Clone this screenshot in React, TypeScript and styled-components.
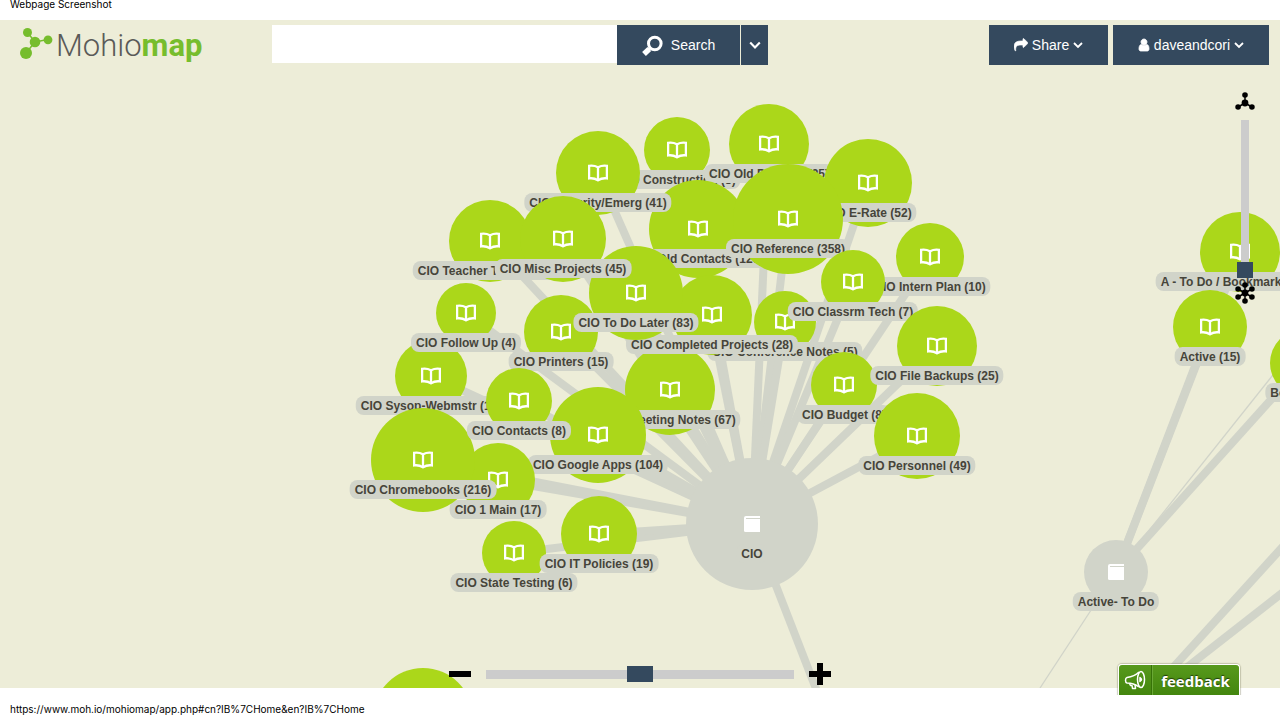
import React from "react";
import styled, { createGlobalStyle } from "styled-components";

const color = {
  page: "#ffffff",
  canvas: "#ededd8",
  leaf: "#abd71a",
  hub: "#d1d4c9",
  navy: "#34495e",
  text: "#46443a",
  track: "#cccccc",
  brand: "#76bd2d",
};

type Kind = "leaf" | "hub";
interface MapNode {
  x: number;
  y: number;
  r: number;
  label?: string;
  kind?: Kind;
}

/* Coordinates are on the free canvas; later nodes lie over earlier ones. */
const nodes: MapNode[] = [
  { x: 677, y: 130, r: 33, label: "CIO Construction (8)" },
  { x: 769, y: 124, r: 40, label: "CIO Old Projects (25)" },
  { x: 698, y: 209, r: 49, label: "CIO Old Contacts (120)" },
  { x: 598, y: 153, r: 42, label: "CIO Security/Emerg (41)" },
  { x: 868, y: 163, r: 44, label: "CIO E-Rate (52)" },
  { x: 788, y: 199, r: 55, label: "CIO Reference (358)" },
  { x: 930, y: 237, r: 34, label: "CIO Intern Plan (10)" },
  { x: 785, y: 302, r: 31, label: "CIO Conference Notes (5)" },
  { x: 844, y: 365, r: 33, label: "CIO Budget (8)" },
  { x: 670, y: 370, r: 45, label: "CIO Meeting Notes (67)" },
  { x: 712, y: 295, r: 40, label: "CIO Completed Projects (28)" },
  { x: 561, y: 312, r: 37, label: "CIO Printers (15)" },
  { x: 636, y: 273, r: 47, label: "CIO To Do Later (83)" },
  { x: 490, y: 221, r: 41, label: "CIO Teacher Training (38)" },
  { x: 563, y: 219, r: 43, label: "CIO Misc Projects (45)" },
  { x: 598, y: 415, r: 48, label: "CIO Google Apps (104)" },
  { x: 853, y: 262, r: 32, label: "CIO Classrm Tech (7)" },
  { x: 937, y: 326, r: 40, label: "CIO File Backups (25)" },
  { x: 917, y: 416, r: 43, label: "CIO Personnel (49)" },
  { x: 431, y: 356, r: 36, label: "CIO Sysop-Webmstr (16)" },
  { x: 498, y: 460, r: 37, label: "CIO 1 Main (17)" },
  { x: 423, y: 440, r: 52, label: "CIO Chromebooks (216)" },
  { x: 519, y: 381, r: 33, label: "CIO Contacts (8)" },
  { x: 466, y: 293, r: 30, label: "CIO Follow Up (4)" },
  { x: 514, y: 533, r: 32, label: "CIO State Testing (6)" },
  { x: 599, y: 514, r: 38, label: "CIO IT Policies (19)" },
];

const cio: MapNode = { x: 752, y: 504, r: 66, label: "CIO", kind: "hub" };
const todo: MapNode = { x: 1116, y: 552, r: 32, label: "Active- To Do", kind: "hub" };

const todoNodes: MapNode[] = [
  { x: 1240, y: 232, r: 40, label: "A - To Do / Bookmarks (126)" },
  { x: 1210, y: 307, r: 37, label: "Active (15)" },
  { x: 1304, y: 343, r: 34, label: "Best Of (19)" },
];

const looseNodes: MapNode[] = [{ x: 423, y: 698, r: 50 }];

const looseLinks = [
  { x1: 752, y1: 504, x2: 855, y2: 769, w: 8 },
  { x1: 1140, y1: 684, x2: 1326, y2: 479, w: 8 },
  { x1: 1140, y1: 684, x2: 1332, y2: 534, w: 8 },
  { x1: 1116, y1: 552, x2: 1300, y2: 321, w: 1.3 },
  { x1: 1116, y1: 552, x2: 1040, y2: 668, w: 1.3 },
];

const GlobalStyle = createGlobalStyle`
  *, *::before, *::after { box-sizing: border-box; }
  body {
    margin: 0;
    background: ${color.page};
    font-family: "Liberation Sans", Arial, sans-serif;
  }
  button, input { font: inherit; border: 0; margin: 0; padding: 0; }
  button { cursor: pointer; }
`;

const Page = styled.div`
  display: flex;
  flex-direction: column;
  min-height: 100vh;
`;

const Caption = styled.div<{ $height: number; $shift?: boolean }>`
  flex: none;
  height: ${(p) => p.$height}px;
  padding: 0 10px;
  display: flex;
  align-items: ${(p) => (p.$shift ? "flex-end" : "flex-start")};
  font-family: Inter, Verdana, sans-serif;
  font-size: 10px;
  line-height: ${(p) => (p.$shift ? 12 : 8)}px;
  color: #000;
  white-space: nowrap;
`;

const Stage = styled.main`
  position: relative;
  flex: 1;
  min-height: 600px;
  background: ${color.canvas};
`;

const Canvas = styled.div`
  position: absolute;
  inset: 0;
  overflow: hidden;
`;

const Links = styled.svg`
  display: block;
  width: 100%;
  height: 100%;
`;

const NodeButton = styled.button<{ $x: number; $y: number; $r: number; $kind: Kind }>`
  position: absolute;
  left: ${(p) => p.$x - p.$r}px;
  top: ${(p) => p.$y - p.$r}px;
  width: ${(p) => p.$r * 2}px;
  height: ${(p) => p.$r * 2}px;
  display: flex;
  align-items: center;
  justify-content: center;
  border-radius: 50%;
  background: ${(p) => color[p.$kind]};
`;

const NodeLabel = styled.span`
  position: absolute;
  top: calc(50% + 20px);
  left: 50%;
  transform: translateX(-50%);
  padding: 2px 5px 0;
  border-radius: 8px;
  background: ${color.hub};
  color: ${color.text};
  font-size: 12px;
  font-weight: bold;
  line-height: 17px;
  white-space: nowrap;
`;

const Header = styled.header`
  position: relative;
  display: flex;
  align-items: flex-start;
  padding: 5px 11px 0 20px;
`;

const Logo = styled.a`
  flex: none;
  display: flex;
  width: 252px;
  height: 40px;
  color: #5a5a58;
  font-family: Roboto, sans-serif;
  font-size: 31px;
  font-weight: 300;
  line-height: 42px;
  text-decoration: none;

  svg { flex: none; margin: 2px 2px 0 0; }
  strong { color: ${color.brand}; font-weight: 700; }
`;

const SearchForm = styled.form`
  flex: 0 1 496px;
  min-width: 240px;
  display: flex;
  align-items: flex-start;
`;

const SearchInput = styled.input`
  flex: 1;
  min-width: 0;
  height: 38px;
  padding: 0 10px;
  border-radius: 0;
  background: #fff;
  font-size: 14px;
`;

const BarButton = styled.button<{ $width: number; $gap?: number }>`
  flex: none;
  display: flex;
  align-items: center;
  justify-content: center;
  gap: ${(p) => p.$gap ?? 4}px;
  width: ${(p) => p.$width}px;
  height: 40px;
  background: ${color.navy};
  color: #fff;
  font-size: 14px;
`;

const SplitButton = styled(BarButton)`
  margin-left: 1px;
`;

const Actions = styled.nav`
  display: flex;
  gap: 5px;
  margin-left: auto;
`;

const DepthControl = styled.div`
  position: absolute;
  top: 71px;
  right: 24px;
  display: flex;
  flex-direction: column;
  align-items: center;
  width: 22px;
`;

const IconButton = styled.button`
  display: flex;
  align-items: center;
  justify-content: center;
  background: transparent;
  color: #000;
`;

const Range = styled.input<{ $vertical?: boolean }>`
  appearance: none;
  display: block;
  background: transparent;
  width: ${(p) => (p.$vertical ? 16 : 308)}px;
  height: ${(p) => (p.$vertical ? 158 : 16)}px;
  writing-mode: ${(p) => (p.$vertical ? "vertical-lr" : "horizontal-tb")};

  &::-webkit-slider-runnable-track {
    background: linear-gradient(${color.track}, ${color.track}) center / ${(p) =>
      p.$vertical ? "8px 100%" : "100% 9px"} no-repeat;
  }
  &::-webkit-slider-thumb {
    appearance: none;
    width: ${(p) => (p.$vertical ? 16 : 26)}px;
    height: 16px;
    background: ${color.navy};
  }
`;

const DepthRange = styled(Range)`
  margin: 8px 0 3px;
`;

const ZoomControl = styled.div`
  position: absolute;
  left: 0;
  right: 0;
  bottom: 3px;
  display: flex;
  align-items: center;
  justify-content: center;
  gap: 15px;
  pointer-events: none;

  > * { pointer-events: auto; }
`;

const Feedback = styled.button`
  position: absolute;
  right: 40px;
  bottom: -7px;
  display: flex;
  width: 122px;
  height: 31px;
  border: 1px solid #fff;
  border-bottom: 0;
  border-radius: 4px 4px 0 0;
  background: linear-gradient(#57991c, #43860e);
  box-shadow: 0 0 1px 1px rgba(120, 120, 90, 0.35);
  clip-path: inset(-3px -3px 0 -3px);
  color: #fff;
  font-family: "Open Sans", Verdana, sans-serif;
  font-size: 15px;
  font-weight: bold;
  line-height: 32px;
  text-shadow: 0 -1px 1px rgba(0, 0, 0, 0.6);
`;

const FeedbackIcon = styled.span`
  display: flex;
  align-items: center;
  justify-content: center;
  width: 33px;
  height: 30px;
  border-right: 1px solid #377208;
  box-shadow: 1px 0 0 #6aa836;
`;

const FeedbackText = styled.span`
  flex: 1;
  text-align: center;
`;

const OpenBook = () => (
  <svg width="20" height="18" viewBox="0 0 20 18" fill="none" stroke="#fff" strokeWidth="2.300" aria-hidden="true">
    <path d="M1.100 1.800C4.200 1.300 7.500 1.900 10 3.200C12.500 1.900 15.800 1.300 18.900 1.800V14.400C15.800 14 12.500 14.700 10 16.300C7.500 14.700 4.200 14 1.100 14.400Z" />
    <path d="M10 3V16" />
  </svg>
);

const ClosedBook = () => (
  <svg width="16" height="16" viewBox="0 0 16 16" aria-hidden="true">
    <path d="M2 0H16V16H1.500Q0 16 0 14.500V2Q0 0 2 0Z" fill="#fff" />
    <path d="M2 2.500H16" stroke={color.hub} strokeWidth="1" />
  </svg>
);

const LogoMark = () => (
  <svg width="34" height="34" viewBox="0 0 34 34" fill={color.brand} stroke={color.brand} strokeWidth="1.5" aria-hidden="true">
    <path d="M7.500 5.500L15 15L28 12.600M15 15L6 26" fill="none" />
    <g stroke="none">
      <circle cx="7.500" cy="5.500" r="4.500" />
      <circle cx="15" cy="15" r="5.300" />
      <circle cx="28" cy="12.800" r="4.400" />
      <circle cx="6" cy="26" r="6" />
    </g>
  </svg>
);

const SearchIcon = () => (
  <svg width="21" height="21" viewBox="0 0 21 21" fill="none" stroke="#fff" aria-hidden="true">
    <circle cx="12.800" cy="8.500" r="6.300" strokeWidth="3" />
    <path d="M8 13L6.500 14.500" strokeWidth="3" />
    <path d="M7.300 14L2 19" strokeWidth="5.500" />
  </svg>
);

const Chevron = ({ size = 10 }: { size?: number }) => (
  <svg width={size} height={size} viewBox="0 0 10 10" fill="none" stroke="#fff" strokeWidth="1.800" aria-hidden="true">
    <path d="M1 3L5 7L9 3" />
  </svg>
);

const ShareIcon = () => (
  <svg width="14" height="14" viewBox="0 0 1792 1792" fill="#fff" stroke="#fff" strokeWidth="90" aria-hidden="true">
    <path d="M1792 640q0 26-19 45l-512 512q-19 19-45 19t-45-19-19-45v-256h-224q-98 0-175.500 6t-154 21.500-133 42.500-105.500 69.500-80 101-48.500 138.500-17.500 181q0 55 5 123 0 6 2.500 23.500t2.500 26.500q0 15-8.500 25t-23.500 10q-16 0-28-17-7-9-13-22t-13.500-30-10.500-24q-127-285-127-451 0-199 53-333 162-403 875-403h224v-256q0-26 19-45t45-19 45 19l512 512q19 19 19 45z" />
  </svg>
);

const UserIcon = () => (
  <svg width="12" height="14" viewBox="128 0 1536 1792" fill="#fff" stroke="#fff" strokeWidth="100" aria-hidden="true">
    <path d="M1536 1399q0 109-62.500 187t-150.500 78h-854q-88 0-150.500-78t-62.500-187q0-85 8.500-160.500t31.500-152 58.500-131 94-89 134.500-34.500q131 128 313 128t313-128q76 0 134.500 34.500t94 89 58.500 131 31.500 152 8.500 160.500zm-256-887q0 159-112.500 271.500t-271.500 112.500-271.500-112.500-112.500-271.500 112.500-271.500 271.500-112.500 271.500 112.500 112.500 271.500z" />
  </svg>
);

const ClusterIcon = ({ angles, reach, cy, height }: { angles: number[]; reach: number; cy: number; height: number }) => (
  <svg width="22" height={height} viewBox={`0 0 22 ${height}`} aria-hidden="true">
    {angles.map((a) => {
      const x = 11 + reach * Math.cos((a * Math.PI) / 180);
      const y = cy + reach * Math.sin((a * Math.PI) / 180);
      return (
        <g key={a}>
          <line x1="11" y1={cy} x2={x} y2={y} stroke="#000" strokeWidth="1.500" />
          <circle cx={x} cy={y} r="2.800" />
        </g>
      );
    })}
    <circle cx="11" cy={cy} r="3.400" />
  </svg>
);

const Megaphone = () => (
  <svg width="22" height="20" viewBox="0 0 22 20" fill="none" stroke="#fff" strokeWidth="1.500" strokeLinejoin="round" aria-hidden="true">
    <path d="M15 2C11 6 7 7 3 7.500C1 8 1 12.500 3 13C7 13 11 14 15 17" />
    <ellipse cx="17" cy="9.500" rx="3.500" ry="8" />
    <path d="M16 7.500Q19 9.500 16 11.500Z" fill="#fff" />
    <path d="M5.500 13.500L6.500 15.500L8 15.500L8.500 18.500H11.500L11 14.500" />
  </svg>
);

const Node = ({ node }: { node: MapNode }) => {
  const kind = node.kind ?? "leaf";
  return (
    <NodeButton type="button" $x={node.x} $y={node.y} $r={node.r} $kind={kind}>
      {kind === "hub" ? <ClosedBook /> : <OpenBook />}
      {node.label && <NodeLabel>{node.label}</NodeLabel>}
    </NodeButton>
  );
};

export default function App() {
  return (
    <>
      <GlobalStyle />
      <Page>
        <Caption $height={20}>Webpage Screenshot</Caption>
        <Stage>
          <Canvas>
            <Links stroke={color.hub} aria-hidden="true">
              {nodes.map((n) => (
                <line key={n.label} x1={cio.x} y1={cio.y} x2={n.x} y2={n.y} strokeWidth="8" />
              ))}
              {todoNodes.map((n) => (
                <line key={n.label} x1={todo.x} y1={todo.y} x2={n.x} y2={n.y} strokeWidth="8" />
              ))}
              {looseLinks.map((l, i) => (
                <line key={i} x1={l.x1} y1={l.y1} x2={l.x2} y2={l.y2} strokeWidth={l.w} />
              ))}
            </Links>
            {[...nodes, cio, ...todoNodes, todo, ...looseNodes].map((n) => (
              <Node key={`${n.x}-${n.y}`} node={n} />
            ))}
          </Canvas>

          <Header>
            <Logo href="#home">
              <LogoMark />
              <span>Mohio<strong>map</strong></span>
            </Logo>
            <SearchForm role="search" onSubmit={(e) => e.preventDefault()}>
              <SearchInput type="text" aria-label="Search" />
              <BarButton type="submit" $width={123} $gap={8}>
                <SearchIcon />
                Search
              </BarButton>
              <SplitButton type="button" $width={27} aria-label="Search options">
                <Chevron size={12} />
              </SplitButton>
            </SearchForm>
            <Actions>
              <BarButton type="button" $width={119}>
                <ShareIcon />
                Share
                <Chevron />
              </BarButton>
              <BarButton type="button" $width={156}>
                <UserIcon />
                daveandcori
                <Chevron />
              </BarButton>
            </Actions>
          </Header>

          <DepthControl>
            <IconButton type="button" aria-label="Fewer levels">
              <ClusterIcon angles={[-90, 30, 150]} reach={8} cy={12} height={21} />
            </IconButton>
            <DepthRange $vertical type="range" min={0} max={10} defaultValue={10} aria-label="Levels" />
            <IconButton type="button" aria-label="More levels">
              <ClusterIcon angles={[-90, -30, 30, 90, 150, 210]} reach={8} cy={12} height={24} />
            </IconButton>
          </DepthControl>

          <ZoomControl>
            <IconButton type="button" aria-label="Zoom out">
              <svg width="22" height="22" viewBox="0 0 22 22" aria-hidden="true">
                <path d="M0 8H22V14H0Z" />
              </svg>
            </IconButton>
            <Range type="range" min={0} max={100} defaultValue={50} aria-label="Zoom" />
            <IconButton type="button" aria-label="Zoom in">
              <svg width="22" height="22" viewBox="0 0 22 22" aria-hidden="true">
                <path d="M8 0H14V8H22V14H14V22H8V14H0V8H8Z" />
              </svg>
            </IconButton>
          </ZoomControl>

          <Feedback type="button">
            <FeedbackIcon>
              <Megaphone />
            </FeedbackIcon>
            <FeedbackText>feedback</FeedbackText>
          </Feedback>
        </Stage>
        <Caption as="footer" $height={27} $shift>
          https://www.moh.io/mohiomap/app.php#cn?IB%7CHome&amp;en?IB%7CHome
        </Caption>
      </Page>
    </>
  );
}
